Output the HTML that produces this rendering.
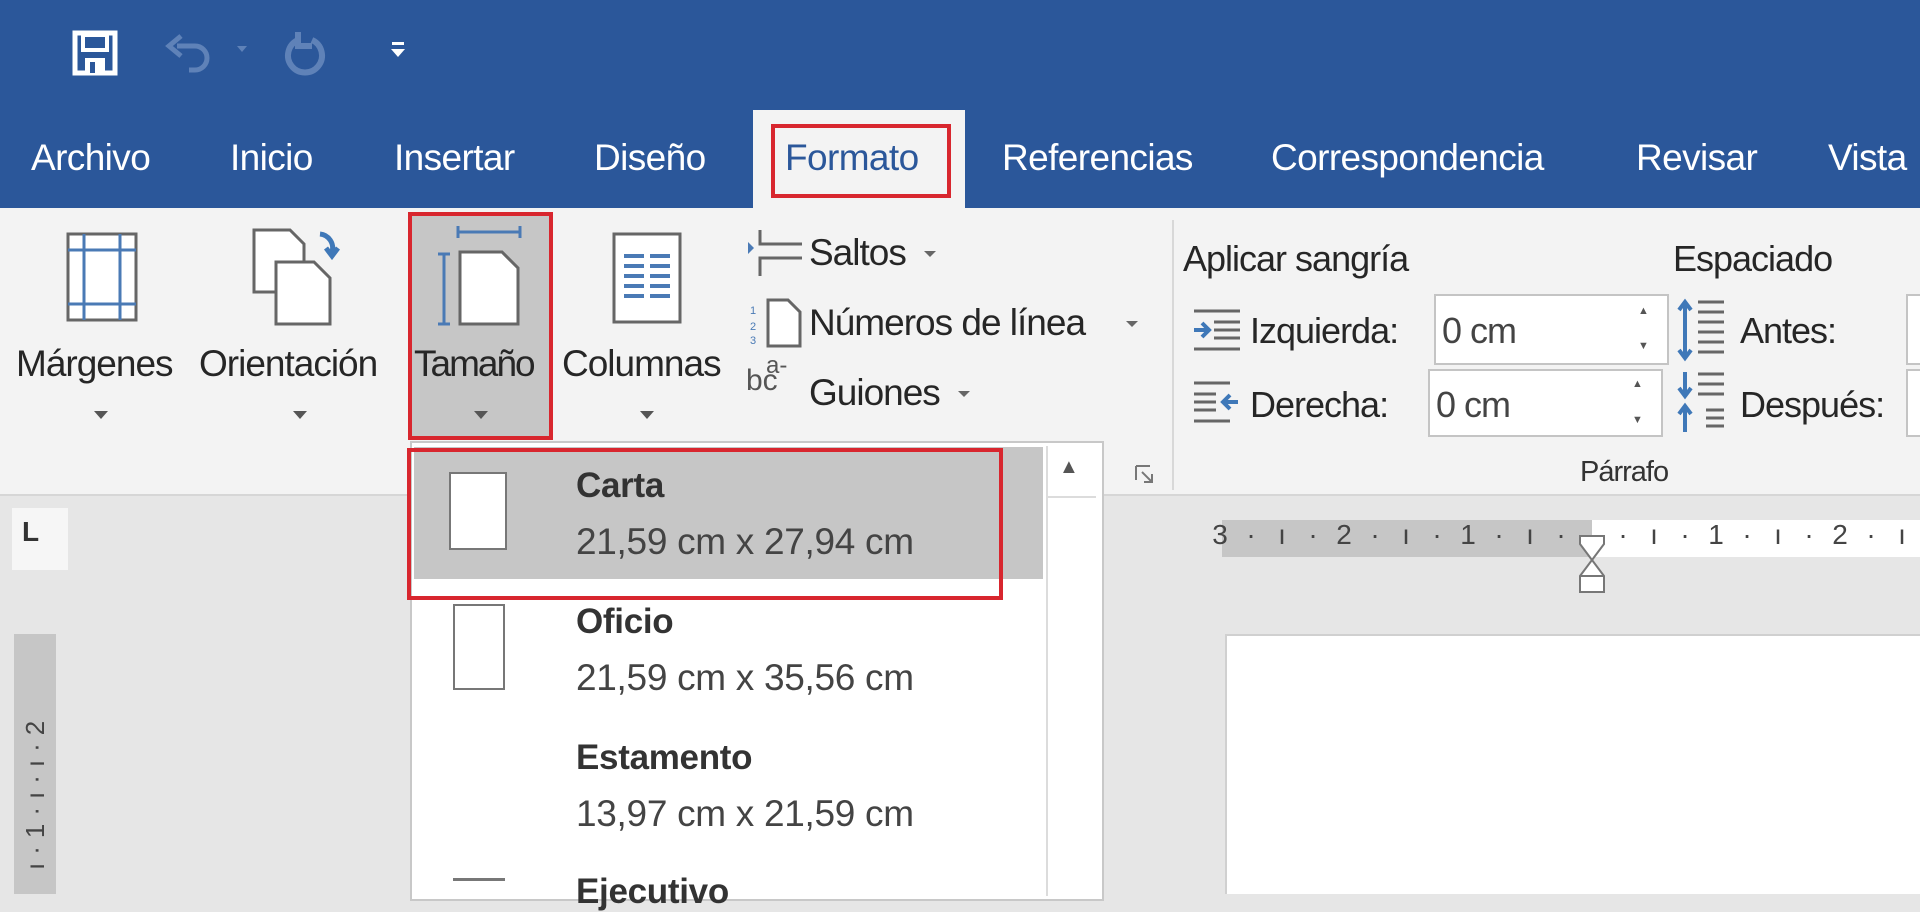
<!DOCTYPE html>
<html><head><meta charset="utf-8"><style>
*{margin:0;padding:0;box-sizing:border-box}
body{width:1920px;height:887px;overflow:hidden;background:#e6e6e6;font-family:"Liberation Sans",sans-serif;position:relative;color:#262626}
.a{position:absolute;white-space:nowrap}
.tab{position:absolute;top:137px;font-size:37px;color:#fff;letter-spacing:-0.6px}
.lbl{position:absolute;font-size:37px;letter-spacing:-1px;color:#262626}
.arr{position:absolute;width:0;height:0;border-left:7px solid transparent;border-right:7px solid transparent;border-top:8px solid #555}
.t{font-size:35px;letter-spacing:-1px;color:#262626}
.d{font-size:37px;letter-spacing:-0.3px;color:#444}
.r{position:absolute;top:519px;font-size:28px;color:#444;transform:translateX(-50%)}
</style></head><body>
<div class="a" style="left:0;top:0;width:1920px;height:208px;background:#2b579a"></div>
<!-- quick access -->
<svg class="a" style="left:72px;top:30px" width="46" height="46" viewBox="0 0 46 46">
<rect x="3" y="3" width="40" height="40" fill="none" stroke="#fff" stroke-width="5"/>
<rect x="11" y="5" width="24" height="15" fill="none" stroke="#fff" stroke-width="4"/>
<rect x="13" y="28" width="20" height="15" fill="#fff"/><rect x="18" y="32" width="5" height="11" fill="#2b579a"/>
</svg>
<svg class="a" style="left:165px;top:32px" width="90" height="44" viewBox="0 0 90 44">
<path d="M12 14 H30 a12 12 0 0 1 0 24 H24" stroke="#5f82b8" stroke-width="5" fill="none"/>
<path d="M16 4 L4 14 L16 24" stroke="#5f82b8" stroke-width="5" fill="none"/>
<path d="M72 14 l5 6 l5 -6z" fill="#5f82b8"/>
</svg>
<svg class="a" style="left:282px;top:30px" width="50" height="48" viewBox="0 0 50 48">
<path d="M16 10 a17 17 0 1 0 14 0" stroke="#5f82b8" stroke-width="6" fill="none"/>
<path d="M30 2 V16 H44" stroke="#5f82b8" stroke-width="6" fill="none" transform="translate(-14,0)"/>
</svg>
<svg class="a" style="left:390px;top:40px" width="18" height="22"><rect x="2" y="2" width="12" height="3" fill="#fff"/><path d="M1 9 h14 l-7 8z" fill="#fff"/></svg>
<!-- Formato tab -->
<div class="a" style="left:753px;top:110px;width:212px;height:100px;background:#f3f3f3"></div>
<div class="a" style="left:771px;top:124px;width:180px;height:74px;border:4px solid #d8262e"></div>
<div class="tab" style="left:31px">Archivo</div>
<div class="tab" style="left:230px">Inicio</div>
<div class="tab" style="left:394px">Insertar</div>
<div class="tab" style="left:594px">Diseño</div>
<div class="tab" style="left:785px;color:#2b579a">Formato</div>
<div class="tab" style="left:1002px">Referencias</div>
<div class="tab" style="left:1271px">Correspondencia</div>
<div class="tab" style="left:1636px">Revisar</div>
<div class="tab" style="left:1828px">Vista</div>
<!-- ribbon -->
<div class="a" style="left:0;top:208px;width:1920px;height:288px;background:#f3f3f3;border-bottom:2px solid #d6d6d6"></div>
<div class="a" style="left:1172px;top:220px;width:2px;height:270px;background:#d8d8d8"></div>
<div class="a" style="left:408px;top:212px;width:145px;height:228px;background:#c6c6c6;border:4px solid #d8262e"></div>
<svg class="a" style="left:66px;top:232px" width="72" height="92"><rect x="2" y="2" width="68" height="86" fill="#fff" stroke="#666" stroke-width="3"/><path d="M2 18 H70 M2 72 H70 M18 2 V88 M54 2 V88" stroke="#4a7ab5" stroke-width="3"/></svg>
<svg class="a" style="left:252px;top:228px" width="100" height="100"><path d="M2 2 H38 L52 16 V64 H2Z" fill="#fff" stroke="#666" stroke-width="3"/><path d="M24 38 H62 L78 54 V100 H24Z" fill="#fff" stroke="#666" stroke-width="3" transform="translate(0,-4)"/><path d="M68 6 a14 14 0 0 1 12 18 M74 20 l6 8 l6 -8" stroke="#3f78b8" stroke-width="5" fill="none"/></svg>
<svg class="a" style="left:438px;top:226px" width="88" height="102"><path d="M20 6 H82 M20 0 V12 M82 0 V12 M6 28 V98 M0 28 H12 M0 98 H12" stroke="#4a7ab5" stroke-width="3"/><path d="M22 26 H64 L80 42 V98 H22Z" fill="#fff" stroke="#666" stroke-width="3"/></svg>
<svg class="a" style="left:612px;top:232px" width="72" height="92"><rect x="2" y="2" width="66" height="88" fill="#fff" stroke="#666" stroke-width="3"/><g stroke="#4a7ab5" stroke-width="4"><path d="M12 24 H32 M38 24 H58 M12 34 H32 M38 34 H58 M12 44 H32 M38 44 H58 M12 54 H32 M38 54 H58 M12 64 H32 M38 64 H58"/></g></svg>
<div class="lbl" style="left:16px;top:343px">Márgenes</div>
<div class="lbl" style="left:199px;top:343px">Orientación</div>
<div class="lbl" style="left:414px;top:343px;letter-spacing:-2px">Tamaño</div>
<div class="lbl" style="left:562px;top:343px">Columnas</div>
<div class="arr" style="left:94px;top:411px"></div>
<div class="arr" style="left:293px;top:411px"></div>
<div class="arr" style="left:474px;top:411px"></div>
<div class="arr" style="left:640px;top:411px"></div>
<svg class="a" style="left:746px;top:228px" width="58" height="50"><path d="M14 2 V16 H56 M14 48 V30 H56" stroke="#666" stroke-width="3" fill="none"/><path d="M2 14 l6 6 l-6 6z" fill="#4a7ab5"/></svg>
<div class="a t" style="left:809px;top:232px;font-size:37px">Saltos</div><div class="arr" style="left:924px;top:251px;border-width:6px 6px 0 6px;border-top-color:#666"></div>
<svg class="a" style="left:748px;top:298px" width="60" height="50"><path d="M20 2 H40 L52 14 V48 H20Z" fill="#fff" stroke="#666" stroke-width="3"/><text x="2" y="16" font-size="11" fill="#4a7ab5" font-family="Liberation Sans">1</text><text x="2" y="32" font-size="11" fill="#4a7ab5" font-family="Liberation Sans">2</text><text x="2" y="46" font-size="11" fill="#4a7ab5" font-family="Liberation Sans">3</text></svg>
<div class="a t" style="left:809px;top:302px;font-size:37px">Números de línea</div><div class="arr" style="left:1126px;top:321px;border-width:6px 6px 0 6px;border-top-color:#666"></div>
<div class="a" style="left:746px;top:366px;font-size:30px;color:#555;line-height:1">bc</div>
<div class="a" style="left:766px;top:352px;font-size:24px;color:#555">a-</div>
<div class="a t" style="left:809px;top:372px;font-size:37px">Guiones</div><div class="arr" style="left:958px;top:391px;border-width:6px 6px 0 6px;border-top-color:#666"></div>
<!-- Párrafo -->
<div class="a t" style="left:1183px;top:238px;font-size:36px">Aplicar sangría</div>
<div class="a t" style="left:1673px;top:238px;font-size:36px">Espaciado</div>
<svg class="a" style="left:1192px;top:308px" width="50" height="44"><path d="M2 3 H48 M22 14 H48 M22 22 H48 M22 30 H48 M2 41 H48" stroke="#666" stroke-width="3"/><path d="M2 22 H16 M10 15 l7 7 l-7 7" stroke="#3f78b8" stroke-width="4" fill="none"/></svg>
<div class="a t" style="left:1250px;top:310px;font-size:36px">Izquierda:</div>
<div class="a" style="left:1434px;top:294px;width:235px;height:71px;background:#fff;border:2px solid #c4c4c4"></div>
<div class="a t" style="left:1442px;top:310px;color:#444;font-size:36px">0 cm</div>
<div class="a" style="left:1638px;top:305px;font-size:11px;color:#555">▲</div><div class="a" style="left:1638px;top:340px;font-size:11px;color:#555">▼</div>
<svg class="a" style="left:1192px;top:380px" width="50" height="44"><path d="M2 3 H38 M2 14 H24 M2 22 H24 M2 30 H24 M2 41 H38" stroke="#666" stroke-width="3"/><path d="M46 22 H32 M38 15 l-7 7 l7 7" stroke="#3f78b8" stroke-width="4" fill="none"/></svg>
<div class="a t" style="left:1250px;top:384px;font-size:36px">Derecha:</div>
<div class="a" style="left:1428px;top:369px;width:235px;height:68px;background:#fff;border:2px solid #c4c4c4"></div>
<div class="a t" style="left:1436px;top:384px;color:#444;font-size:36px">0 cm</div>
<div class="a" style="left:1632px;top:378px;font-size:11px;color:#555">▲</div><div class="a" style="left:1632px;top:414px;font-size:11px;color:#555">▼</div>
<svg class="a" style="left:1676px;top:298px" width="52" height="64"><path d="M22 4 H48 M22 14 H48 M22 24 H48 M22 34 H48 M22 44 H48 M22 54 H48" stroke="#666" stroke-width="3"/><path d="M9 4 V60 M3 12 l6 -8 l6 8 M3 52 l6 8 l6 -8" stroke="#3f78b8" stroke-width="4" fill="none"/></svg>
<div class="a t" style="left:1740px;top:310px;font-size:36px">Antes:</div>
<svg class="a" style="left:1676px;top:370px" width="52" height="64"><path d="M22 4 H48 M22 14 H48 M22 24 H48 M30 40 H48 M30 48 H48 M30 56 H48" stroke="#666" stroke-width="3"/><path d="M9 2 V26 M3 18 l6 8 l6 -8 M9 36 V62 M3 44 l6 -8 l6 8" stroke="#3f78b8" stroke-width="4" fill="none"/></svg>
<div class="a t" style="left:1740px;top:384px;font-size:36px">Después:</div>
<div class="a" style="left:1906px;top:294px;width:30px;height:71px;background:#fff;border:2px solid #c4c4c4"></div>
<div class="a" style="left:1906px;top:369px;width:30px;height:68px;background:#fff;border:2px solid #c4c4c4"></div>
<div class="a" style="left:1580px;top:456px;font-size:29px;color:#333;letter-spacing:-1px">Párrafo</div>
<svg class="a" style="left:1134px;top:464px" width="22" height="22"><path d="M2 2 H16 M2 2 V16" stroke="#777" stroke-width="2" fill="none"/><path d="M8 8 L18 18 M18 10 V18 H10" stroke="#777" stroke-width="2" fill="none"/></svg>
<!-- rulers -->
<div class="a" style="left:12px;top:508px;width:56px;height:62px;background:#f6f6f6"></div>
<div class="a" style="left:22px;top:516px;font-size:28px;color:#333;font-weight:bold">L</div>
<div class="a" style="left:1222px;top:520px;width:698px;height:37px;background:#fff"></div>
<div class="a" style="left:1222px;top:520px;width:370px;height:37px;background:#c6c6c6"></div>
<div class="r" style="left:1220px">3</div><div class="r" style="left:1251px">·</div><div class="r" style="left:1282px">ı</div><div class="r" style="left:1313px">·</div>
<div class="r" style="left:1344px">2</div><div class="r" style="left:1375px">·</div><div class="r" style="left:1406px">ı</div><div class="r" style="left:1437px">·</div>
<div class="r" style="left:1468px">1</div><div class="r" style="left:1499px">·</div><div class="r" style="left:1530px">ı</div><div class="r" style="left:1561px">·</div>
<div class="r" style="left:1623px">·</div><div class="r" style="left:1654px">ı</div><div class="r" style="left:1685px">·</div>
<div class="r" style="left:1716px">1</div><div class="r" style="left:1747px">·</div><div class="r" style="left:1778px">ı</div><div class="r" style="left:1809px">·</div>
<div class="r" style="left:1840px">2</div><div class="r" style="left:1871px">·</div><div class="r" style="left:1902px">ı</div>
<svg class="a" style="left:1578px;top:534px" width="30" height="60"><path d="M2 2 H26 V10 L14 26 L26 42 V58 H2 V42 L14 26 L2 10Z" fill="#fff" stroke="#777" stroke-width="2"/><path d="M2 42 H26" stroke="#777" stroke-width="2"/></svg>
<div class="a" style="left:14px;top:634px;width:42px;height:260px;background:#c6c6c6"></div>
<div class="a" style="left:20px;font-size:26px;color:#444;transform:rotate(-90deg);transform-origin:left top;top:870px;letter-spacing:8px">ı·1·ı·ı·2</div>
<div class="a" style="left:1225px;top:634px;width:700px;height:260px;background:#fff;border-top:2px solid #d0d0d0;border-left:2px solid #d0d0d0"></div>
<!-- dropdown -->
<div class="a" style="left:410px;top:441px;width:694px;height:460px;background:#fff;border:2px solid #c8c8c8"></div>
<div class="a" style="left:1046px;top:446px;width:50px;height:450px;background:#fff;border-left:2px solid #dcdcdc"></div>
<div class="a" style="left:1046px;top:496px;width:50px;height:2px;background:#dcdcdc"></div>
<div class="a" style="left:1059px;top:456px;font-size:20px;color:#555">▲</div>
<div class="a" style="left:414px;top:447px;width:629px;height:132px;background:#c6c6c6"></div>
<div class="a" style="left:407px;top:448px;width:596px;height:152px;border:4px solid #d8262e"></div>
<div class="a" style="left:449px;top:472px;width:58px;height:78px;background:#fff;border:2px solid #777"></div>
<div class="a" style="left:453px;top:604px;width:52px;height:86px;background:#fff;border:2px solid #777"></div>
<div class="a" style="left:453px;top:878px;width:52px;height:20px;border-top:3px solid #777"></div>
<div class="a d" style="left:576px;top:466px;font-weight:bold;color:#333;font-size:35px">Carta</div>
<div class="a d" style="left:576px;top:521px">21,59 cm x 27,94 cm</div>
<div class="a d" style="left:576px;top:602px;font-weight:bold;color:#333;font-size:35px">Oficio</div>
<div class="a d" style="left:576px;top:657px">21,59 cm x 35,56 cm</div>
<div class="a d" style="left:576px;top:738px;font-weight:bold;color:#333;font-size:35px">Estamento</div>
<div class="a d" style="left:576px;top:793px">13,97 cm x 21,59 cm</div>
<div class="a d" style="left:576px;top:872px;font-weight:bold;color:#333;font-size:35px">Ejecutivo</div>
</body></html>
